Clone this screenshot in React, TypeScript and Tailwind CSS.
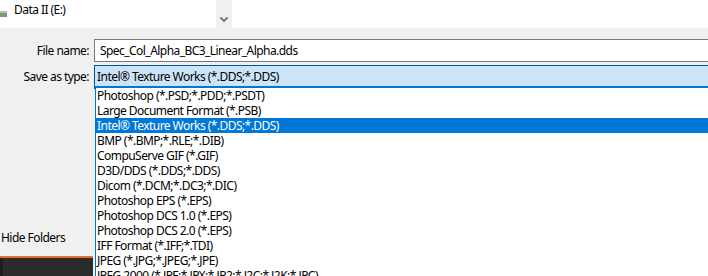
const fileTypes = [
  'Photoshop (*.PSD;*.PDD;*.PSDT)',
  'Large Document Format (*.PSB)',
  'Intel® Texture Works (*.DDS;*.DDS)',
  'BMP (*.BMP;*.RLE;*.DIB)',
  'CompuServe GIF (*.GIF)',
  'D3D/DDS (*.DDS;*.DDS)',
  'Dicom (*.DCM;*.DC3;*.DIC)',
  'Photoshop EPS (*.EPS)',
  'Photoshop DCS 1.0 (*.EPS)',
  'Photoshop DCS 2.0 (*.EPS)',
  'IFF Format (*.IFF;*.TDI)',
  'JPEG (*.JPG;*.JPEG;*.JPE)',
  'JPEG 2000 (*.JPF;*.JPX;*.JP2;*.J2C;*.J2K;*.JPC)',
];

const selected = 2;

function DriveIcon() {
  return (
    <svg width="8" height="6" viewBox="0 0 8 6" className="shrink-0">
      <rect x="0" y="0" width="8" height="6" fill="#8c8c8c" />
      <rect x="0" y="0" width="8" height="2" fill="#b9b9b9" />
      <rect x="1" y="3" width="2" height="2" fill="#3fbf3f" />
    </svg>
  );
}

export default function App() {
  return (
    <div
      className="relative w-[708px] h-[276px] overflow-hidden bg-[#f0f0f0] text-[12px] leading-none tracking-[-0.55px] text-black"
      style={{ fontFamily: '"Segoe UI", "Noto Sans", "Open Sans", sans-serif' }}
    >
      {/* folder tree strip */}
      <div className="flex h-[28px] bg-white">
        <div className="flex w-[216px] items-start">
          <div className="mt-[11px] -ml-[1px]">
            <DriveIcon />
          </div>
          <span className="ml-[7px] mt-[3px] leading-[14px]">Data II (E:)</span>
        </div>
        <div className="flex w-[16px] items-end justify-center bg-[#f0f0f0] pb-[6px]">
          <svg width="8" height="5" viewBox="0 0 8 5">
            <path d="M0.5 0.5 L4 4 L7.5 0.5" fill="none" stroke="#606060" strokeWidth="1.6" />
          </svg>
        </div>
        <div className="flex-1 bg-white" />
      </div>

      {/* form */}
      <div className="mt-[11px] flex items-center">
        <div className="w-[89px] text-right leading-[14px]">File name:</div>
        <div className="ml-[5px] flex h-[23px] flex-1 items-center border border-r-0 border-[#7a7a7a] bg-white pl-[5px] leading-[14px]">
          Spec_Col_Alpha_BC3_Linear_Alpha.dds
        </div>
      </div>
      <div className="mt-[3px] flex items-center">
        <div className="w-[89px] text-right leading-[14px]">Save as type:</div>
        <div className="ml-[5px] flex h-[24px] flex-1 items-center border border-r-0 border-[#005499] bg-[#cce4f7] pl-[2px] leading-[14px]">
          Intel® Texture Works (*.DDS;*.DDS)
        </div>
      </div>

      <div className="mt-[142px] pl-[1px] leading-[14px]">Hide Folders</div>

      <div className="mt-[11px] h-[2px] w-[93px] bg-[#e3702f]" />
      <div className="flex h-[30px] w-[93px] bg-[#2b2b2b]">
        <div className="w-[3px] bg-[#1e1e1e]" />
      </div>

      {/* open dropdown list */}
      <div className="absolute left-[95px] top-[86px] w-[640px] border-l border-t-2 border-[#0078d7] bg-white">
        {fileTypes.map((t, i) => (
          <div
            key={t}
            className={
              'flex h-[15px] items-center whitespace-nowrap pl-[1px] leading-[15px] ' +
              (i === selected ? 'bg-[#0078d7] text-white' : '')
            }
          >
            {t}
          </div>
        ))}
      </div>
    </div>
  );
}
